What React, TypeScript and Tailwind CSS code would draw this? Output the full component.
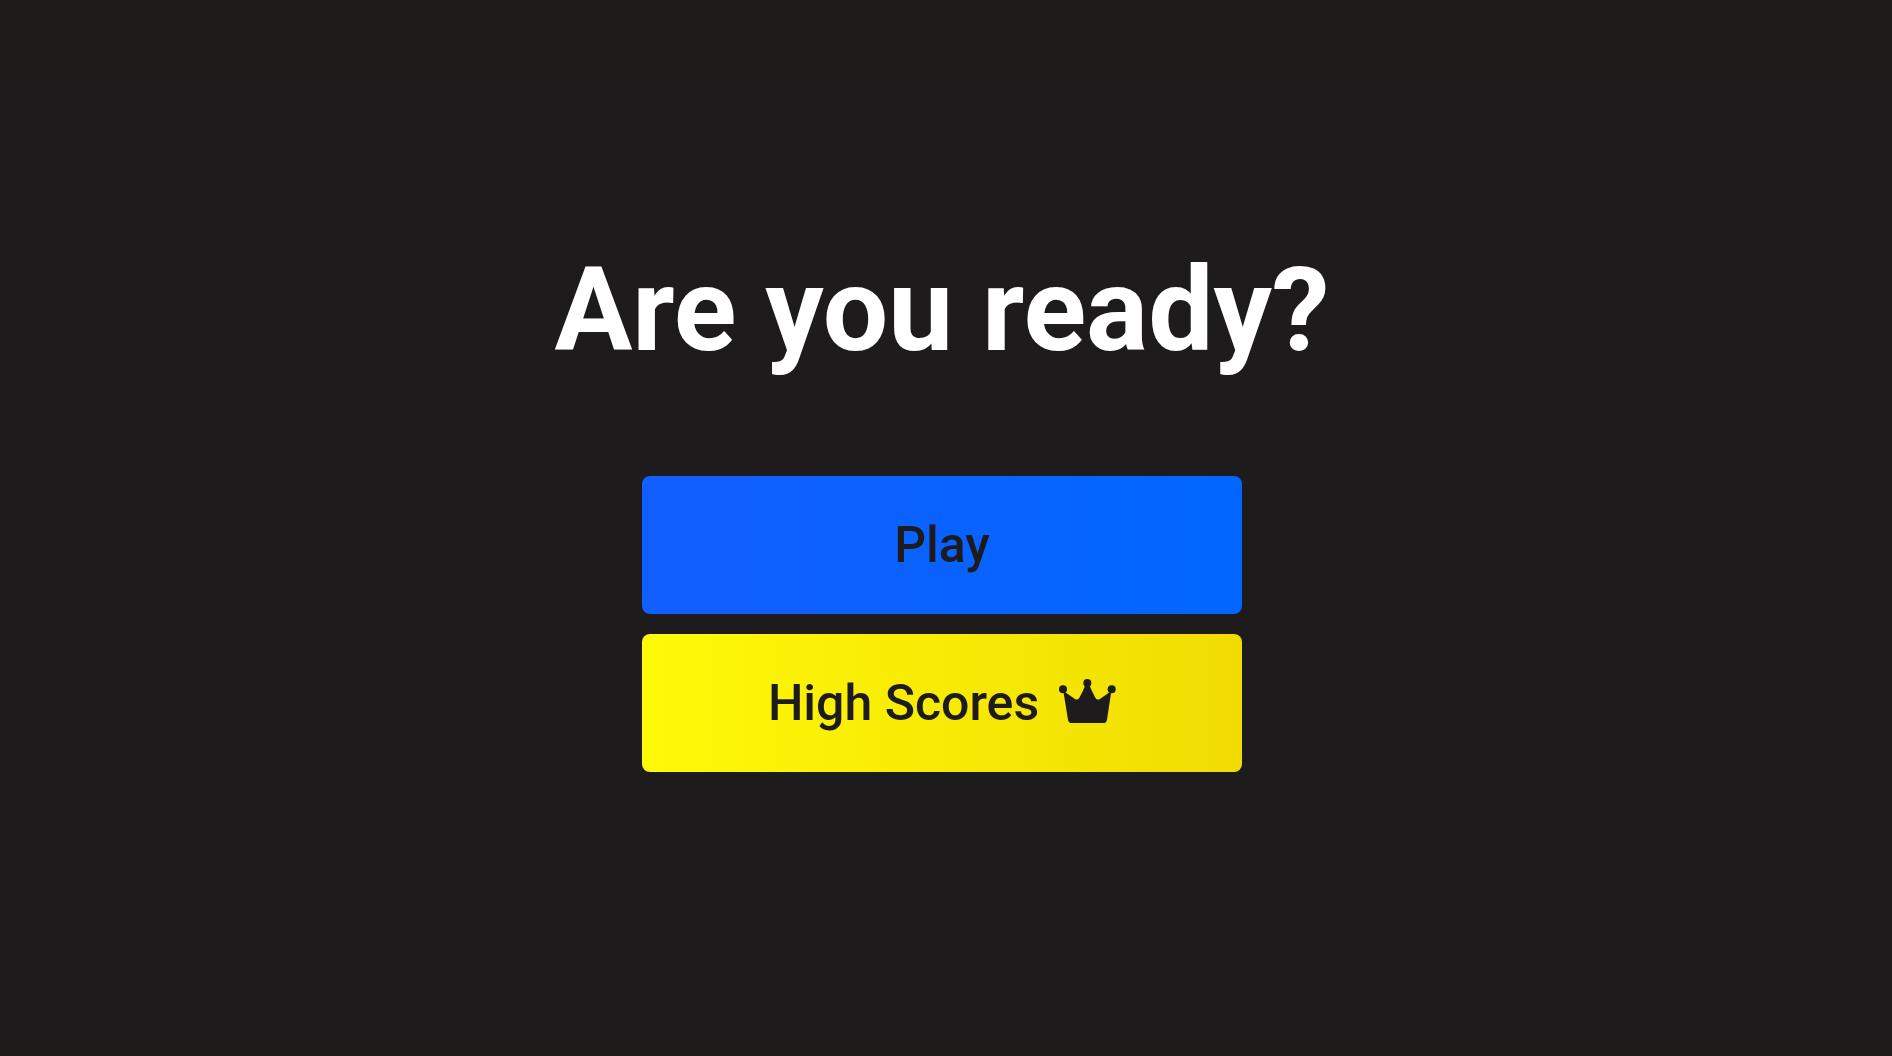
function Crown() {
  return (
    <svg viewBox="0 0 171 132" className="mb-1 h-[44px] w-[57px] shrink-0" fill="currentColor" aria-hidden="true">
      <circle cx="12" cy="31" r="12" />
      <circle cx="85" cy="12" r="12" />
      <circle cx="158" cy="31" r="12" />
      <path d="M13 36 L48 60 Q56 65 61 56 Q73 36 80 16 L90 16 Q98 36 109 56 Q114 65 123 60 L157 36 L144 122 Q142 132 133 132 L38 132 Q29 132 27 122 Z" />
    </svg>
  );
}

export default function App() {
  return (
    <main className="flex min-h-screen flex-col items-center justify-center bg-[#1d1b1c] bg-[linear-gradient(to_bottom,#1f1b19_76px,#1d1b1c_84px,#1d1b1c_calc(100%-20px),#1f1b19_calc(100%-8px))] pr-2 font-['Roboto',sans-serif] text-[#1d1b1c]">
      <h1 className="mb-24 text-center text-[116px] leading-[140px] font-bold text-white">Are you ready?</h1>
      <nav className="mb-11 flex w-full max-w-[600px] flex-col gap-5 text-[50px] leading-[58px] font-medium">
        <button type="button" className="flex items-center justify-center rounded-lg bg-linear-to-r/srgb from-[#125eff] to-[#0066ff] py-10">
          Play
        </button>
        <button type="button" className="flex items-center justify-center gap-5 rounded-lg bg-linear-to-r/srgb from-[#fff908] to-[#f0dc02] py-10">
          High Scores
          <Crown />
        </button>
      </nav>
    </main>
  );
}
